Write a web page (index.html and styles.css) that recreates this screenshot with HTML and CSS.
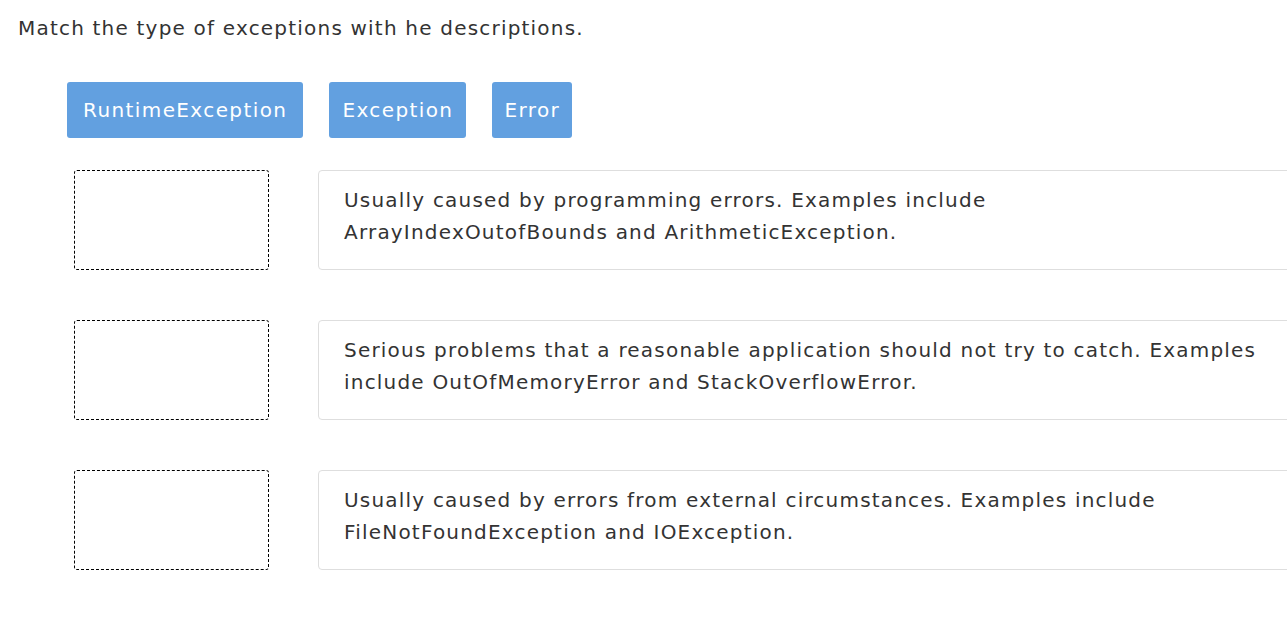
FILE: index.html
```html
<!DOCTYPE html>
<html>
<head>
<meta charset="utf-8">
<link rel="stylesheet" href="styles.css">
</head>
<body>
<div class="page">
  <p class="prompt">Match the type of exceptions with he descriptions.</p>
  <div class="options">
    <div class="chip">RuntimeException</div>
    <div class="chip">Exception</div>
    <div class="chip">Error</div>
  </div>
  <div class="rows">
    <div class="row">
      <div class="drop"></div>
      <div class="desc">Usually caused by programming errors. Examples include ArrayIndexOutofBounds and ArithmeticException.</div>
    </div>
    <div class="row">
      <div class="drop"></div>
      <div class="desc">Serious problems that a reasonable application should not try to catch. Examples include OutOfMemoryError and StackOverflowError.</div>
    </div>
    <div class="row">
      <div class="drop"></div>
      <div class="desc">Usually caused by errors from external circumstances. Examples include FileNotFoundException and IOException.</div>
    </div>
  </div>
</div>
</body>
</html>
```
FILE: styles.css
```css
html, body {
  margin: 0;
  padding: 0;
  background: #fff;
  overflow: hidden;
}
.page {
  font-family: "DejaVu Sans", sans-serif;
  color: #333;
  font-size: 20px;
  letter-spacing: 1.2px;
  padding: 14px 0 0 18px;
  width: 1400px;
}
.prompt {
  margin: 0;
  line-height: 28px;
  font-size: 20px;
}
.options {
  display: flex;
  gap: 26px;
  margin: 40px 0 0 49px;
}
.chip {
  background: #62a0e0;
  color: #fff;
  height: 56px;
  line-height: 56px;
  padding: 0 13px;
  border-radius: 3px;
  font-size: 20px;
  letter-spacing: 1.4px;
}
.chip:first-child {
  padding: 0 16px;
}
.chip:last-child {
  padding: 0 12px;
}
.rows {
  display: flex;
  flex-direction: column;
  gap: 50px;
  margin: 32px 0 0 56px;
}
.row {
  display: flex;
  gap: 49px;
  height: 100px;
}
.drop {
  width: 193px;
  height: 98px;
  border: 1px dashed #000;
  border-radius: 3px;
}
.desc {
  flex: none;
  width: 980px;
  height: 100px;
  box-sizing: border-box;
  border: 1px solid #dedede;
  border-radius: 4px;
  padding: 13px 40.5px 13px 25px;
  line-height: 32px;
  font-size: 20px;
}
```
